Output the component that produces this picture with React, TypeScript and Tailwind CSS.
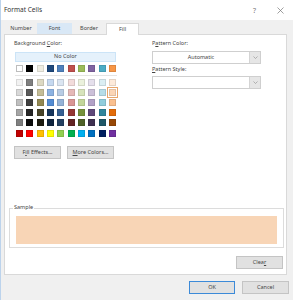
import React from 'react';

const themeRow = ['#FFFFFF', '#000000', '#EEECE1', '#1F497D', '#4F81BD', '#C0504D', '#9BBB59', '#8064A2', '#4BACC6', '#F79646'];

const tintRows = [
  ['#F2F2F2', '#7F7F7F', '#DDD9C3', '#C6D9F0', '#DBE5F1', '#F2DCDB', '#EBF1DD', '#E5E0EC', '#DBEEF3', '#FDEADA'],
  ['#D8D8D8', '#595959', '#C4BD97', '#8DB3E2', '#B8CCE4', '#E5B9B7', '#D7E3BC', '#CCC1D9', '#B7DDE8', '#FBD5B5'],
  ['#BFBFBF', '#3F3F3F', '#938953', '#548DD4', '#95B3D7', '#D99694', '#C3D69B', '#B2A2C7', '#92CDDC', '#FAC08F'],
  ['#A5A5A5', '#262626', '#494429', '#17365D', '#366092', '#953734', '#76923C', '#5F497A', '#31859B', '#E36C09'],
  ['#7F7F7F', '#0C0C0C', '#1D1B10', '#0F243E', '#244061', '#632423', '#4F6128', '#3F3151', '#205867', '#974806'],
];

const standardRow = ['#C00000', '#FF0000', '#FFC000', '#FFFF00', '#92D050', '#00B050', '#00B0F0', '#0070C0', '#002060', '#7030A0'];

const Swatch: React.FC<{ color: string; selected?: boolean }> = ({ color, selected }) => (
  <span
    className={`block w-[7px] h-[7px] border ${color === '#FFFFFF' ? 'border-[#bdbdbd]' : 'border-black/10'} ${
      selected ? 'outline outline-offset-[1px] outline-[#eaa66a]' : ''
    }`}
    style={{ backgroundColor: color }}
  />
);

const SwatchRow: React.FC<{ colors: string[]; selectedIndex?: number }> = ({ colors, selectedIndex }) => (
  <div className="w-[100px] flex justify-between">
    {colors.map((c, i) => (
      <Swatch key={c + i} color={c} selected={i === selectedIndex} />
    ))}
  </div>
);

const Chevron = () => (
  <svg width="5" height="3" viewBox="0 0 5 3">
    <path d="M0.5 0.5 L2.5 2.5 L4.5 0.5" fill="none" stroke="#8a8a8a" strokeWidth="0.6" />
  </svg>
);

const Dropdown: React.FC<{ value?: string }> = ({ value }) => (
  <div className="h-[13px] w-[109px] flex border border-[#cfcfcf] bg-white">
    <div className="flex-1 flex items-center justify-center text-[5.5px]">{value}</div>
    <div className="w-[11px] bg-[#e6e6e6] border-l border-[#d4d4d4] flex items-center justify-center">
      <Chevron />
    </div>
  </div>
);

const Button: React.FC<{ children: React.ReactNode; w: string; primary?: boolean }> = ({ children, w, primary }) => (
  <div
    className={`${w} h-[13px] bg-[#e1e1e1] border flex items-center justify-center text-[5.5px] ${
      primary ? 'border-[#3c8ad8]' : 'border-[#c4c4c4]'
    }`}
  >
    {children}
  </div>
);

export default function App() {
  return (
    <div className="w-[293px] h-[300px] bg-[#f0f0f0] border-l border-[#bcd3ec] flex flex-col overflow-hidden font-['Noto_Sans','Open_Sans',sans-serif] text-[#444] leading-none">
      {/* title bar */}
      <div className="h-[20px] shrink-0 bg-white flex items-center pl-[3px] pr-[9px]">
        <span className="text-[6.5px] text-[#333]">Format Cells</span>
        <span className="ml-auto mr-[21px] text-[7px] text-[#777]">?</span>
        <svg width="7" height="7" viewBox="0 0 7 7">
          <path d="M0.5 0.5 L6.5 6.5 M6.5 0.5 L0.5 6.5" stroke="#777" strokeWidth="0.7" />
        </svg>
      </div>

      {/* tabs */}
      <div className="h-[14px] shrink-0 flex items-end pl-[4px] text-[5.5px]">
        <div className="w-[32px] h-[11px] flex items-center justify-center">Number</div>
        <div className="w-[35px] h-[11px] flex items-center justify-center bg-[#d9e8f6]">Font</div>
        <div className="w-[34px] h-[11px] flex items-center justify-center">Border</div>
        <div className="relative top-px z-10 w-[33px] h-[12px] flex items-center justify-center bg-white border border-b-0 border-[#d9d9d9]">
          Fill
        </div>
      </div>

      {/* tab panel */}
      <div className="ml-[3px] w-[283px] h-[241px] shrink-0 bg-white border border-[#d9d9d9] flex flex-col">
        <div className="flex">
          {/* background colour column */}
          <div className="ml-[9px] w-[103px] pt-[5px] flex flex-col">
            <div className="h-[8px] flex items-center text-[5.5px]">
              Background&nbsp;<span className="underline">C</span>olor:
            </div>
            <div className="mt-[4px] ml-[1px] w-[101px] h-[10px] bg-[#e5f1fb] border border-[#cce4f7] flex items-center justify-center text-[5.5px]">
              No Color
            </div>
            <div className="mt-[3px] ml-[2px]">
              <SwatchRow colors={themeRow} />
            </div>
            <div className="mt-[3px] ml-[1px] w-[102px] h-px bg-[#e4e4e4]" />
            <div className="mt-[3px] ml-[2px] flex flex-col gap-[3px]">
              {tintRows.map((row, i) => (
                <SwatchRow key={i} colors={row} selectedIndex={i === 1 ? 9 : undefined} />
              ))}
            </div>
            <div className="mt-[4px] ml-[2px]">
              <SwatchRow colors={standardRow} />
            </div>
            <div className="mt-[9px] flex gap-[6px]">
              <Button w="w-[47px]">
                F<span className="underline">i</span>ll Effects...
              </Button>
              <Button w="w-[47px]">
                <span className="underline">M</span>ore Colors...
              </Button>
            </div>
          </div>

          {/* pattern column */}
          <div className="ml-[35px] w-[109px] pt-[5px] flex flex-col">
            <div className="h-[8px] flex items-center text-[5.5px]">
              P<span className="underline">a</span>ttern Color:
            </div>
            <div className="mt-[3px]">
              <Dropdown value="Automatic" />
            </div>
            <div className="mt-[2px] h-[8px] flex items-center text-[5.5px]">
              <span className="underline">P</span>attern Style:
            </div>
            <div className="mt-[2px]">
              <Dropdown />
            </div>
          </div>
        </div>

        {/* sample */}
        <div className="mt-[49px] ml-[4px] w-[275px] border border-[#dcdcdc] flex flex-col">
          <div className="-mt-[5px] ml-[3px] h-[8px] w-fit px-px bg-white flex items-center text-[5.5px]">Sample</div>
          <div className="mt-[4px] mb-[3px] ml-[6px] w-[261px] h-[28px] bg-[#f8d5b6]" />
        </div>

        <div className="mt-[8px] mr-[3px] self-end">
          <Button w="w-[47px]">
            Clea<span className="underline">r</span>
          </Button>
        </div>
      </div>

      {/* dialog buttons */}
      <div className="mt-[6px] pr-[4px] flex justify-end gap-[7px]">
        <Button w="w-[46px]" primary>
          OK
        </Button>
        <Button w="w-[47px]">Cancel</Button>
      </div>
    </div>
  );
}
